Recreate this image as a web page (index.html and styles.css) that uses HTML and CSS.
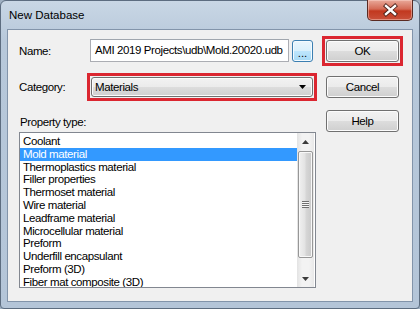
FILE: index.html
```html
<html>
<head>
<title>New Database</title>
<link rel="stylesheet" href="styles.css">
</head>
<body>

<div class="window">
  <div class="titlebar">
    <span class="title">New Database</span>
    <div class="close">
      <svg width="45" height="20" viewBox="0 0 45 20">
        <path d="M18 6 L27 14 M27 6 L18 14" stroke="#4a1f18" stroke-width="4.2" stroke-linecap="square"/>
        <path d="M18 6 L27 14 M27 6 L18 14" stroke="#fff" stroke-width="2.4" stroke-linecap="square"/>
      </svg>
    </div>
  </div>

  <div class="client">
    <div class="form">
      <div class="row">
        <label class="lbl lbl-name">Name:</label>
        <div class="textbox">AMI 2019 Projects\udb\Mold.20020.udb</div>
        <button class="browse">...</button>
      </div>

      <div class="row row-cat">
        <label class="lbl lbl-cat">Category:</label>
        <div class="mark">
          <div class="combo">
            <span class="combo-text">Materials</span>
            <svg class="combo-arrow" width="7" height="4" viewBox="0 0 7 4"><path d="M0 0 H7 L3.5 4 Z" fill="#000"/></svg>
          </div>
        </div>
      </div>

      <div class="lbl-prop">Property type:</div>

      <div class="listbox">
        <ul class="items">
          <li>Coolant</li>
          <li class="selected">Mold material</li>
          <li>Thermoplastics material</li>
          <li>Filler properties</li>
          <li>Thermoset material</li>
          <li>Wire material</li>
          <li>Leadframe material</li>
          <li>Microcellular material</li>
          <li>Preform</li>
          <li>Underfill encapsulant</li>
          <li>Preform (3D)</li>
          <li>Fiber mat composite (3D)</li>
        </ul>
        <div class="scrollbar">
          <div class="sb-btn">
            <svg width="7" height="4" viewBox="0 0 7 4"><path d="M0 4 H7 L3.5 0 Z" fill="#3c3c3c"/></svg>
          </div>
          <div class="sb-track">
            <div class="sb-thumb">
              <div class="grip"></div>
            </div>
          </div>
          <div class="sb-btn">
            <svg width="7" height="4" viewBox="0 0 7 4"><path d="M0 0 H7 L3.5 4 Z" fill="#3c3c3c"/></svg>
          </div>
        </div>
      </div>
    </div>

    <div class="actions">
      <div class="mark mark-ok"><button class="btn">OK</button></div>
      <button class="btn btn-cancel">Cancel</button>
      <button class="btn btn-help">Help</button>
    </div>
  </div>
</div>

</body>
</html>
```

FILE: styles.css
```css
* {
  box-sizing: border-box;
}

body {
  margin: 0;
  width: 420px;
  height: 309px;
  overflow: hidden;
  background: #9fb0c2;
  font-family: "Liberation Sans", Arial, sans-serif;
  font-size: 11.5px;
  letter-spacing: -0.4px;
  color: #000;
}

.window {
  width: 420px;
  height: 309px;
  border: 1px solid #5d6d80;
  border-radius: 6px 6px 4px 4px;
  background: linear-gradient(to bottom, #c9d7e5, #b7c8da 40px, #b4c5d8);
  display: flex;
  flex-direction: column;
}

.titlebar {
  height: 28px;
  display: flex;
  align-items: flex-start;
  justify-content: space-between;
  padding-left: 8px;
}

.title {
  font-size: 11.5px;
  letter-spacing: 0;
  margin-top: 8px;
}

.close {
  width: 46px;
  height: 21px;
  margin-right: 6px;
  margin-top: -1px;
  border: 1px solid #5a2a22;
  border-top: none;
  border-radius: 0 0 5px 5px;
  background: linear-gradient(to bottom, #e9a99a, #d46a55 45%, #c2381f 55%, #c9503a);
  box-shadow: inset 0 0 0 1px rgba(255, 220, 210, .45);
}

.close svg {
  display: block;
}

.client {
  flex: 1;
  margin: 0 6px 6px 6px;
  border: 1px solid #8294aa;
  background: #f0f0f0;
  display: flex;
  padding: 6px 0 0 11px;
}

.form {
  width: 298px;
  margin-top: 3px;
  display: flex;
  flex-direction: column;
}

.row {
  display: flex;
  align-items: center;
}

.lbl {
  flex-shrink: 0;
}

.lbl-name {
  width: 71px;
}

.lbl-cat {
  width: 68px;
}

.textbox {
  width: 199px;
  height: 23px;
  border: 1px solid #abadb3;
  border-top-color: #a0a6ae;
  background: #fff;
  padding: 4px 0 0 4px;
  white-space: nowrap;
  overflow: hidden;
}

.browse {
  width: 21px;
  height: 22px;
  margin-left: 3px;
  border: 1px solid #3c7fb1;
  border-radius: 3px;
  background: linear-gradient(to bottom, #eaf6fd, #d9f0fc 50%, #bee6fd 50%, #a7d9f5);
  box-shadow: inset 0 0 0 1px #f4fbff;
  font: inherit;
  padding: 4px 0 0 0;
  line-height: 12px;
}

.row-cat {
  margin-top: 11px;
}

.mark {
  border: 3px solid #db2630;
  padding: 1px;
}

.row-cat .mark {
  width: 230px;
}

.combo {
  height: 20px;
  border: 1px solid #707070;
  border-radius: 3px;
  background: linear-gradient(to bottom, #f2f2f2, #ebebeb 50%, #dddddd 50%, #cfcfcf);
  box-shadow: inset 0 0 0 1px #fcfcfc;
  display: flex;
  align-items: center;
  justify-content: space-between;
  padding: 0 6px 0 3px;
}

.combo-arrow {
  display: block;
}

.lbl-prop {
  margin-top: 15px;
  height: 13px;
  line-height: 13px;
  padding-left: 1px;
}

.listbox {
  margin-top: 3px;
  width: 297px;
  height: 156px;
  border: 1px solid #828790;
  background: #fff;
  display: flex;
  overflow: hidden;
}

.items {
  list-style: none;
  margin: 0;
  padding: 2px 0 0 0;
  flex: 1;
}

.items li {
  height: 12.8px;
  line-height: 12.8px;
  padding-left: 3px;
  white-space: nowrap;
}

.items li.selected {
  background: #3399ff;
  color: #fff;
}

.scrollbar {
  width: 17px;
  margin: 0 1px 0 0;
  display: flex;
  flex-direction: column;
  background: linear-gradient(to right, #e3e3e3, #f3f3f3 30%, #f3f3f3 70%, #e8e8e8);
}

.sb-btn {
  height: 17px;
  display: flex;
  align-items: center;
  justify-content: center;
  flex-shrink: 0;
}

.sb-track {
  flex: 1;
  padding: 1px 0 10px 0;
}

.sb-thumb {
  height: 107px;
  margin: 0 1px;
  border: 1px solid #979797;
  border-radius: 2px;
  background: linear-gradient(to right, #f0f0f0, #e3e3e3 45%, #d6d6d6 55%, #c9c9c9);
  box-shadow: inset 0 0 0 1px #f8f8f8;
  display: flex;
  align-items: center;
  justify-content: center;
}

.grip {
  width: 7px;
  height: 7px;
  background: repeating-linear-gradient(to bottom, #6f6f6f 0, #6f6f6f 1px, #f6f6f6 1px, #f6f6f6 2px);
}

.actions {
  width: 81px;
  margin-left: 5px;
  display: flex;
  flex-direction: column;
  align-items: flex-start;
}

.btn {
  width: 73px;
  height: 22px;
  border: 1px solid #707070;
  border-radius: 3px;
  background: linear-gradient(to bottom, #f2f2f2, #ebebeb 50%, #dddddd 50%, #cfcfcf);
  box-shadow: inset 0 0 0 1px #fcfcfc;
  font: inherit;
  letter-spacing: inherit;
  color: #000;
  padding: 0;
}

.btn-cancel {
  margin: 10px 0 0 4px;
}

.btn-help {
  margin: 12px 0 0 4px;
}
```
